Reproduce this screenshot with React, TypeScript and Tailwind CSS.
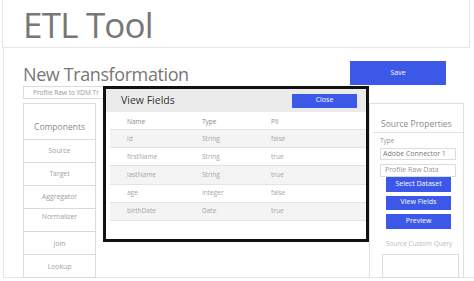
import React from "react";

const rows = [
  { name: "id", type: "String", pii: "false" },
  { name: "firstName", type: "String", pii: "true" },
  { name: "lastName", type: "String", pii: "true" },
  { name: "age", type: "Integer", pii: "false" },
  { name: "birthDate", type: "Date", pii: "true" },
];

const comps = ["Source", "Target", "Aggregator", "Normalizer", "Join", "Lookup"];

export default function App() {
  return (
    <div
      className="relative w-[474px] h-[281px] bg-white overflow-hidden flex flex-col"
      style={{ fontFamily: "'Open Sans', 'Noto Sans', sans-serif" }}
    >
      {/* Header */}
      <div className="ml-[2px] w-[468px] h-[48px] shrink-0 border-x border-b border-[#e6e6e6] flex items-start pl-[20px]">
        <div className="text-[35px] leading-[35px] mt-[7px] text-[#777] tracking-[-0.8px]">ETL Tool</div>
      </div>

      {/* Main */}
      <div className="ml-[3px] h-[230px] shrink-0 border-l border-b border-[#e6e6e6] flex flex-col pl-[19px]">
        {/* Row 1 */}
        <div className="h-[55px] shrink-0 flex">
          <div className="w-[260px] flex flex-col">
            <div className="text-[18px] leading-[24px] mt-[14px] text-[#777] tracking-[-0.4px]">New Transformation</div>
            <div className="h-[13px] w-[100px] border border-[#dcdcdc] flex items-center pl-[9px] text-[6.5px] text-[#999] whitespace-nowrap">
              Profile Raw to XDM Tr
            </div>
          </div>
          <div className="ml-[67px] mt-[13px] w-[96px] h-[24px] bg-[#3b58e8] flex items-center justify-center text-[7px] text-white">
            Save
          </div>
        </div>

        {/* Row 2 */}
        <div className="h-[175px] flex">
          {/* Components */}
          <div className="w-[73px] border border-b-0 border-[#dcdcdc] flex flex-col">
            <div className="h-[37px] flex items-end justify-center pb-[6px] text-[8.5px] text-[#8a8a8a] border-b border-[#dcdcdc]">
              Components
            </div>
            {comps.map((c, i) => (
              <div
                key={c}
                className={
                  "h-[23.4px] flex justify-center text-[6.8px] text-[#a0a0a0] border-b border-[#d8d8d8] " +
                  (i === 3 ? "items-start pt-[3px]" : i >= 4 ? "items-center pt-[3px]" : "items-center")
                }
              >
                {c}
              </div>
            ))}
          </div>

          {/* Canvas */}
          <div className="w-[273px]" />

          {/* Source Properties */}
          <div className="w-[95px] border border-b-0 border-[#e0e0e0] flex flex-col">
            <div className="h-[30px] flex items-end pl-[8px] pb-[1px] text-[8.5px] text-[#8a8a8a] border-b border-[#e4e4e4] ml-[3px] whitespace-nowrap">
              Source Properties
            </div>
            <div className="pl-[10px] mt-[3px] text-[6.5px] leading-[10px] text-[#999]">Type</div>
            <div className="ml-[10px] mt-[2px] w-[76px] h-[12px] border border-[#dcdcdc] flex items-center pl-[2px] text-[7px] text-[#777] whitespace-nowrap">
              Adobe Connector 1
            </div>
            <div className="ml-[10px] mt-[4px] w-[76px] h-[13px] border border-[#dcdcdc] flex items-center pl-[4px] text-[7px] text-[#999] whitespace-nowrap">
              Profile Raw Data
            </div>
            <div className="ml-[16px] w-[65px] flex flex-col gap-[4px]">
              <div className="h-[15px] bg-[#3b58e8] flex items-center justify-center text-[7px] text-white">Select Dataset</div>
              <div className="h-[14px] bg-[#3b58e8] flex items-center justify-center text-[7px] text-white">View Fields</div>
              <div className="h-[15px] bg-[#3b58e8] flex items-center justify-center text-[7px] text-white">Preview</div>
            </div>
            <div className="pl-[16px] mt-[10px] text-[6.5px] leading-[10px] text-[#bbb] whitespace-nowrap">Source Custom Query</div>
            <div className="ml-[12px] mt-[5px] w-[77px] h-[25px] border border-[#dcdcdc]" />
          </div>
        </div>
      </div>

      {/* Modal */}
      <div className="absolute left-[103px] top-[86px] w-[266px] h-[156px] border-[3px] border-[#111] bg-white flex flex-col">
        <div className="h-[23px] shrink-0 bg-[#ebebeb] flex items-center justify-between pl-[15px] pr-[9px]">
          <div className="text-[10.5px] text-[#333]">View Fields</div>
          <div className="w-[65px] h-[14px] bg-[#3b58e8] flex items-center justify-center text-[7px] text-white">Close</div>
        </div>
        <div className="pl-[4px]">
          <div className="h-[18px] flex items-center pt-[3px] text-[6.5px] text-[#8a8a8a] border-b border-[#e2e2e2]">
            <div className="w-[75px] pl-[17px]">Name</div>
            <div className="w-[69px] pl-[17px]">Type</div>
            <div className="pl-[17px]">PII</div>
          </div>
          {rows.map((r, i) => (
            <div
              key={r.name}
              className={
                "h-[18.2px] flex items-center text-[6.5px] text-[#a5a5a5] border-b border-[#e2e2e2] " +
                (i % 2 === 0 ? "bg-[#f4f4f4]" : "bg-white")
              }
            >
              <div className="w-[75px] pl-[17px]">{r.name}</div>
              <div className="w-[69px] pl-[17px]">{r.type}</div>
              <div className="pl-[17px]">{r.pii}</div>
            </div>
          ))}
        </div>
      </div>
    </div>
  );
}
